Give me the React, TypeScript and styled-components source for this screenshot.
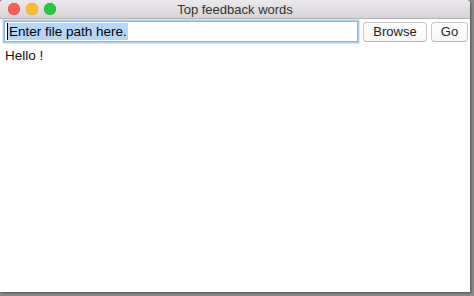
import React from 'react';
import styled, { createGlobalStyle } from 'styled-components';

const GlobalStyle = createGlobalStyle`
  html, body {
    margin: 0;
    padding: 0;
    width: 474px;
    height: 296px;
    overflow: hidden;
    background: #8c8c8c;
    font-family: "Liberation Sans", Arial, sans-serif;
  }
`;

const Window = styled.div`
  width: 470px;
  height: 292px;
  background: #ffffff;
  display: flex;
  flex-direction: column;
  box-shadow: 1px 1px 3px rgba(0, 0, 0, 0.45);
  border-radius: 4px 4px 0 0;
  overflow: hidden;
`;

const TitleBar = styled.div`
  height: 18px;
  flex: none;
  display: flex;
  align-items: center;
  position: relative;
  background: linear-gradient(#ebe9eb, #d5d3d5);
  border-bottom: 1px solid #b5b3b5;
`;

const Lights = styled.div`
  display: flex;
  gap: 6px;
  padding-left: 8px;
`;

const Light = styled.span<{ color: string; edge: string }>`
  width: 12px;
  height: 12px;
  border-radius: 50%;
  background: ${p => p.color};
  box-shadow: inset 0 0 0 0.5px ${p => p.edge};
`;

const Title = styled.div`
  position: absolute;
  left: 0;
  right: 0;
  text-align: center;
  font-size: 13px;
  color: #333;
  pointer-events: none;
`;

const Toolbar = styled.div`
  display: flex;
  align-items: center;
  gap: 4px;
  padding: 2px 2px 0 4px;
`;

const Field = styled.div`
  flex: 1;
  height: 19px;
  margin-right: 1px;
  display: flex;
  align-items: center;
  padding-left: 2px;
  border: 1px solid #8fb6e4;
  box-shadow: 0 0 0 1.5px #a9cdf3;
  background: #fff;
`;

const Selected = styled.span`
  background: #b4d6fb;
  color: #000;
  font-size: 13.5px;
  line-height: 17px;
  padding: 0 1px;
  border-left: 1px solid #000;
`;

const Button = styled.button<{ w: number }>`
  width: ${p => p.w}px;
  height: 20px;
  padding: 0;
  font-family: "Liberation Sans", Arial, sans-serif;
  font-size: 13px;
  color: #222;
  background: linear-gradient(#ffffff, #f6f6f6);
  border: 1px solid #c8c8c8;
  border-bottom-color: #b5b5b5;
  border-radius: 4px;
`;

const Content = styled.div`
  padding: 6px 5px;
  font-size: 13.5px;
  color: #111;
`;

export default function App() {
  return (
    <>
      <GlobalStyle />
      <Window>
        <TitleBar>
          <Lights>
            <Light color="#fc5f57" edge="#e0443e" />
            <Light color="#fdbc2e" edge="#dea123" />
            <Light color="#28c940" edge="#1aab29" />
          </Lights>
          <Title>Top feedback words</Title>
        </TitleBar>
        <Toolbar>
          <Field>
            <Selected>Enter file path here.</Selected>
          </Field>
          <Button w={64}>Browse</Button>
          <Button w={37}>Go</Button>
        </Toolbar>
        <Content>Hello !</Content>
      </Window>
    </>
  );
}
